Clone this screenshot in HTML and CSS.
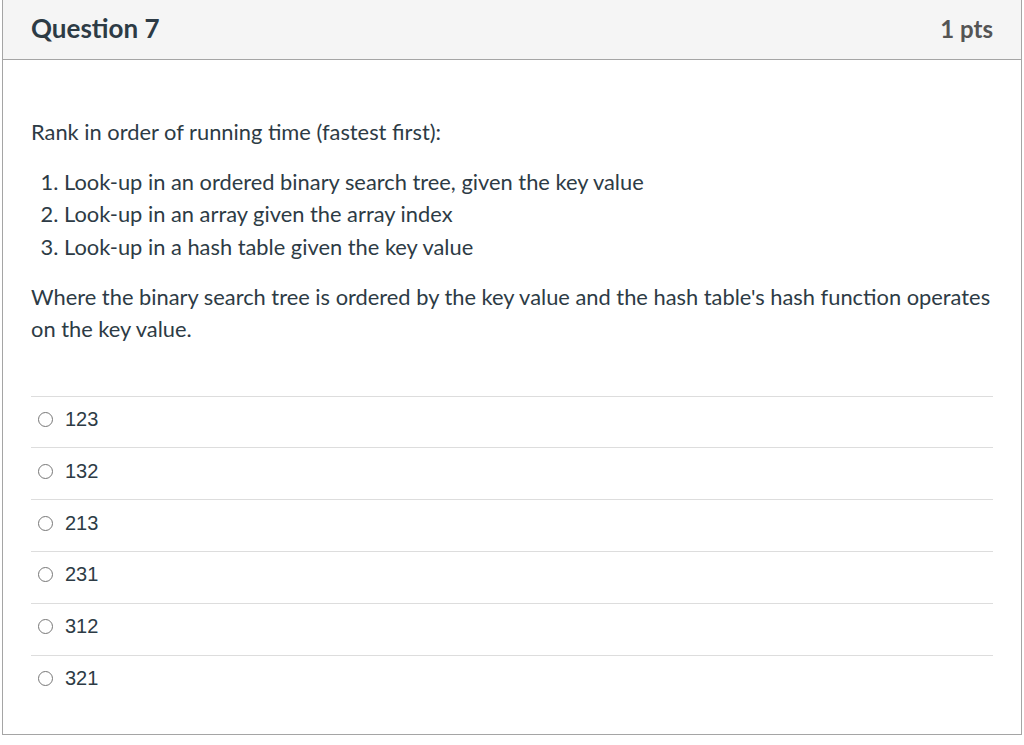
FILE: index.html
```html
<!DOCTYPE html>
<html>
<head>
<meta charset="utf-8">
<link rel="stylesheet" href="styles.css">
</head>
<body>
<div class="question">
  <div class="header">
    <span class="title">Question 7</span>
    <span class="pts">1 pts</span>
  </div>
  <div class="content">
    <p class="prompt">Rank in order of running time (fastest first):</p>
    <ol class="items">
      <li>Look-up in an ordered binary search tree, given the key value</li>
      <li>Look-up in an array given the array index</li>
      <li>Look-up in a hash table given the key value</li>
    </ol>
    <p class="prompt">Where the binary search tree is ordered by the key value and the hash table's hash function operates on the key value.</p>
    <div class="answers">
      <div class="answer"><span class="radio"></span><span class="label">123</span></div>
      <div class="answer"><span class="radio"></span><span class="label">132</span></div>
      <div class="answer"><span class="radio"></span><span class="label">213</span></div>
      <div class="answer"><span class="radio"></span><span class="label">231</span></div>
      <div class="answer"><span class="radio"></span><span class="label">312</span></div>
      <div class="answer"><span class="radio"></span><span class="label">321</span></div>
    </div>
  </div>
</div>
</body>
</html>
```
FILE: styles.css
```css
html, body {
  margin: 0;
  padding: 0;
  background: #ffffff;
}
body {
  font-family: Lato, "Liberation Sans", sans-serif;
  color: #2d3b45;
}
.question {
  margin-left: 2px;
  width: 1018px;
  border: 1px solid #a5a5a5;
  border-top: none;
}
.header {
  height: 59px;
  background: #f5f5f5;
  border-bottom: 1px solid #a5a5a5;
  display: flex;
  align-items: center;
  justify-content: space-between;
  padding: 0 28px;
}
.title {
  font-size: 26px;
  font-weight: bold;
  color: #2d3b45;
  margin-top: -3px;
}
.pts {
  font-size: 24px;
  font-weight: bold;
  color: #555555;
  margin-top: -3px;
}
.content {
  padding: 56px 28px 28px 28px;
}
.prompt {
  margin: 0;
  font-size: 21.85px;
  line-height: 32.4px;
}
.items {
  margin: 17.6px 0;
  padding-left: 33px;
  font-size: 21.85px;
  line-height: 32.4px;
}
.answers {
  margin-top: 50px;
}
.answer {
  border-top: 1px solid #dddddd;
  display: flex;
  align-items: center;
  padding-bottom: 5px;
  box-sizing: border-box;
  height: 51.8px;
  font-family: "Liberation Sans", Arial, sans-serif;
  font-size: 20px;
}
.radio {
  width: 13px;
  height: 13px;
  border: 1px solid #777777;
  border-radius: 50%;
  margin: 0 12px 0 7px;
}
.label {
  color: #2d3b45;
}
```
